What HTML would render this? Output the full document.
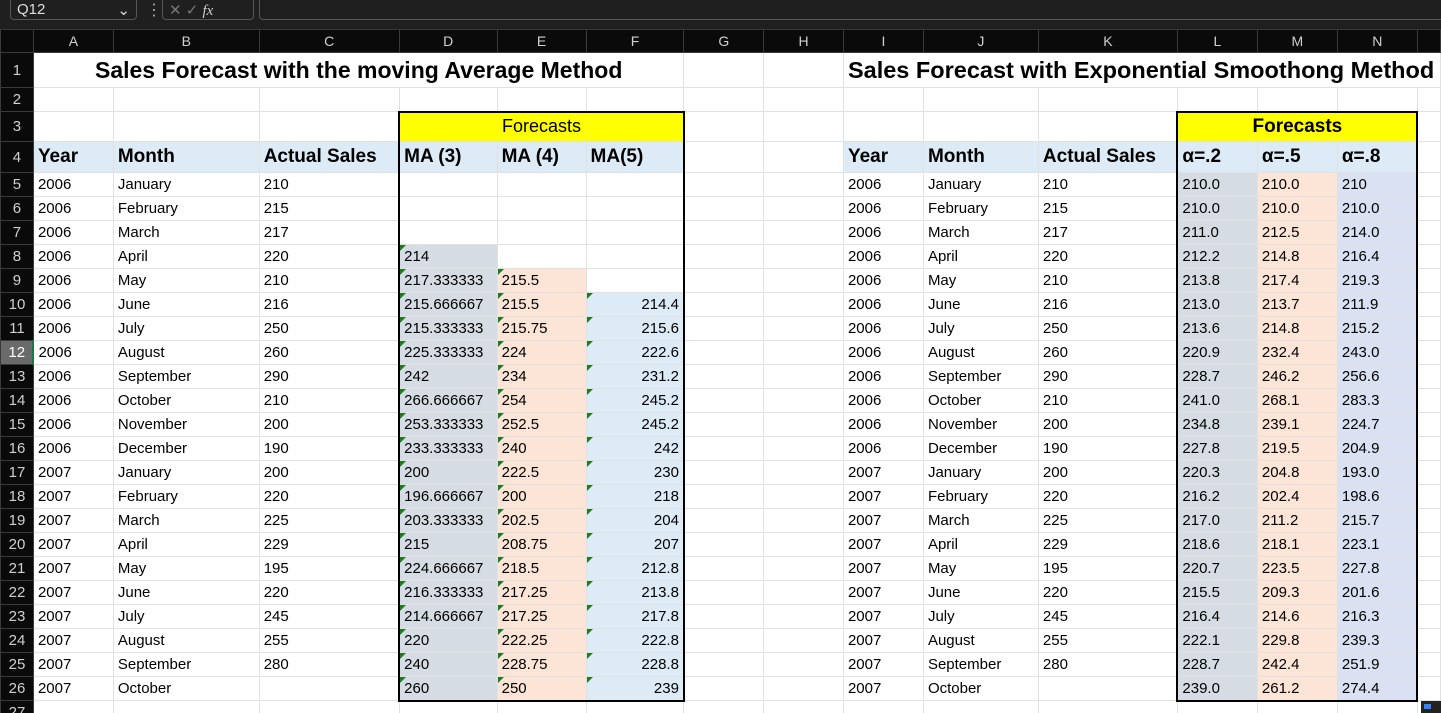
<!DOCTYPE html>
<html><head><meta charset="utf-8"><style>
*{margin:0;padding:0;box-sizing:border-box}
html,body{width:1441px;height:713px;overflow:hidden}
body{background:#fff;font-family:"Liberation Sans",sans-serif;position:relative}
#fb{position:absolute;left:0;top:0;width:1441px;height:29px;background:#1f1f1f}
.nb{position:absolute;top:-4px;height:24px;border:1px solid #555;border-radius:4px;color:#ddd;font-size:15px;padding:4px 6px}
table{position:absolute;left:0;top:29px;border-collapse:collapse;table-layout:fixed}
td{border:1px solid #e1e1e1;font-size:15px;padding:0 4px;white-space:nowrap;overflow:visible;height:24px;color:#000;position:relative}
tr.h td{background:#0a0a0a;color:#d0d0d0;text-align:center;border:1px solid #3a3a3a;height:23px;font-size:14px}
td.r{background:#0a0a0a;color:#d0d0d0;text-align:center;border:1px solid #3a3a3a;padding:0;font-size:15px}
td.sel{background:#6a6a6a;color:#fff;border-right:2px solid #217346}
.b4 td{height:31px;font-weight:bold;font-size:19px}
.b4 td.bl{background:#ddebf7}
.y{background:#ffff00}
.gD{background:#d6dce4}.gE{background:#fce4d6}.gF{background:#ddebf7;text-align:right}.gN{background:#d9e1f2}
.g::before{content:"";position:absolute;left:0;top:0;border-top:6px solid #1e7b1e;border-right:6px solid transparent}
.L{border-left:2px solid #000!important}.R{border-right:2px solid #000!important}.T{border-top:2px solid #000!important}.B{border-bottom:2px solid #000!important}
.t{font-weight:bold;font-size:23px;overflow:visible}
</style></head><body>
<div id="fb"><div class="nb" style="left:10px;width:127px">Q12 <span style="float:right">⌄</span></div><div style="position:absolute;left:146px;top:0;color:#aaa;font-size:16px">⋮</div><div class="nb" style="left:162px;width:92px;color:#777">✕ ✓ <i style="color:#ccc;font-family:'Liberation Serif',serif">fx</i></div><div class="nb" style="left:259px;width:1190px"></div></div>
<table>
<colgroup><col style="width:33px"><col style="width:80px"><col style="width:146px"><col style="width:140px"><col style="width:98px"><col style="width:89px"><col style="width:98px"><col style="width:80px"><col style="width:80px"><col style="width:80px"><col style="width:115px"><col style="width:139px"><col style="width:80px"><col style="width:80px"><col style="width:80px"><col style="width:23px"></colgroup>
<tr class="h"><td style="background:#0a0a0a"></td><td>A</td><td>B</td><td>C</td><td>D</td><td>E</td><td>F</td><td>G</td><td>H</td><td>I</td><td>J</td><td>K</td><td>L</td><td>M</td><td>N</td><td></td></tr>
<tr style="height:35px"><td class="r">1</td><td colspan="6" class="t" style="text-align:center">Sales Forecast with the moving Average Method</td><td></td><td></td><td colspan="7" class="t" style="font-size:23.5px">Sales Forecast with Exponential Smoothong Method</td></tr>
<tr style="height:23px"><td class="r" style="height:23px">2</td><td></td><td></td><td></td><td></td><td></td><td></td><td></td><td></td><td></td><td></td><td></td><td></td><td></td><td></td><td></td></tr>
<tr><td class="r" style="height:30px">3</td><td></td><td></td><td></td><td colspan="3" class="y L R T" style="text-align:center;font-size:18px">Forecasts</td><td></td><td></td><td></td><td></td><td></td><td colspan="3" class="y L R T" style="text-align:center;font-size:19px;font-weight:bold">Forecasts</td><td></td></tr>
<tr class="b4"><td class="r" style="font-weight:normal;font-size:15px">4</td><td class="bl">Year</td><td class="bl">Month</td><td class="bl">Actual Sales</td><td class="bl L">MA (3)</td><td class="bl">MA (4)</td><td class="bl R">MA(5)</td><td></td><td></td><td class="bl">Year</td><td class="bl">Month</td><td class="bl">Actual Sales</td><td class="bl L">α=.2</td><td class="bl">α=.5</td><td class="bl R">α=.8</td><td></td></tr>
<tr><td class="r">5</td><td>2006</td><td>January</td><td>210</td><td class="L"></td><td></td><td class="R"></td><td></td><td></td><td>2006</td><td>January</td><td>210</td><td class="gD L">210.0</td><td class="gE">210.0</td><td class="gN R">210</td><td></td></tr>
<tr><td class="r">6</td><td>2006</td><td>February</td><td>215</td><td class="L"></td><td></td><td class="R"></td><td></td><td></td><td>2006</td><td>February</td><td>215</td><td class="gD L">210.0</td><td class="gE">210.0</td><td class="gN R">210.0</td><td></td></tr>
<tr><td class="r">7</td><td>2006</td><td>March</td><td>217</td><td class="L"></td><td></td><td class="R"></td><td></td><td></td><td>2006</td><td>March</td><td>217</td><td class="gD L">211.0</td><td class="gE">212.5</td><td class="gN R">214.0</td><td></td></tr>
<tr><td class="r">8</td><td>2006</td><td>April</td><td>220</td><td class="gD g L">214</td><td></td><td class="R"></td><td></td><td></td><td>2006</td><td>April</td><td>220</td><td class="gD L">212.2</td><td class="gE">214.8</td><td class="gN R">216.4</td><td></td></tr>
<tr><td class="r">9</td><td>2006</td><td>May</td><td>210</td><td class="gD g L">217.333333</td><td class="gE g">215.5</td><td class="R"></td><td></td><td></td><td>2006</td><td>May</td><td>210</td><td class="gD L">213.8</td><td class="gE">217.4</td><td class="gN R">219.3</td><td></td></tr>
<tr><td class="r">10</td><td>2006</td><td>June</td><td>216</td><td class="gD g L">215.666667</td><td class="gE g">215.5</td><td class="gF g R">214.4</td><td></td><td></td><td>2006</td><td>June</td><td>216</td><td class="gD L">213.0</td><td class="gE">213.7</td><td class="gN R">211.9</td><td></td></tr>
<tr><td class="r">11</td><td>2006</td><td>July</td><td>250</td><td class="gD g L">215.333333</td><td class="gE g">215.75</td><td class="gF g R">215.6</td><td></td><td></td><td>2006</td><td>July</td><td>250</td><td class="gD L">213.6</td><td class="gE">214.8</td><td class="gN R">215.2</td><td></td></tr>
<tr><td class="r sel">12</td><td>2006</td><td>August</td><td>260</td><td class="gD g L">225.333333</td><td class="gE g">224</td><td class="gF g R">222.6</td><td></td><td></td><td>2006</td><td>August</td><td>260</td><td class="gD L">220.9</td><td class="gE">232.4</td><td class="gN R">243.0</td><td></td></tr>
<tr><td class="r">13</td><td>2006</td><td>September</td><td>290</td><td class="gD g L">242</td><td class="gE g">234</td><td class="gF g R">231.2</td><td></td><td></td><td>2006</td><td>September</td><td>290</td><td class="gD L">228.7</td><td class="gE">246.2</td><td class="gN R">256.6</td><td></td></tr>
<tr><td class="r">14</td><td>2006</td><td>October</td><td>210</td><td class="gD g L">266.666667</td><td class="gE g">254</td><td class="gF g R">245.2</td><td></td><td></td><td>2006</td><td>October</td><td>210</td><td class="gD L">241.0</td><td class="gE">268.1</td><td class="gN R">283.3</td><td></td></tr>
<tr><td class="r">15</td><td>2006</td><td>November</td><td>200</td><td class="gD g L">253.333333</td><td class="gE g">252.5</td><td class="gF g R">245.2</td><td></td><td></td><td>2006</td><td>November</td><td>200</td><td class="gD L">234.8</td><td class="gE">239.1</td><td class="gN R">224.7</td><td></td></tr>
<tr><td class="r">16</td><td>2006</td><td>December</td><td>190</td><td class="gD g L">233.333333</td><td class="gE g">240</td><td class="gF g R">242</td><td></td><td></td><td>2006</td><td>December</td><td>190</td><td class="gD L">227.8</td><td class="gE">219.5</td><td class="gN R">204.9</td><td></td></tr>
<tr><td class="r">17</td><td>2007</td><td>January</td><td>200</td><td class="gD g L">200</td><td class="gE g">222.5</td><td class="gF g R">230</td><td></td><td></td><td>2007</td><td>January</td><td>200</td><td class="gD L">220.3</td><td class="gE">204.8</td><td class="gN R">193.0</td><td></td></tr>
<tr><td class="r">18</td><td>2007</td><td>February</td><td>220</td><td class="gD g L">196.666667</td><td class="gE g">200</td><td class="gF g R">218</td><td></td><td></td><td>2007</td><td>February</td><td>220</td><td class="gD L">216.2</td><td class="gE">202.4</td><td class="gN R">198.6</td><td></td></tr>
<tr><td class="r">19</td><td>2007</td><td>March</td><td>225</td><td class="gD g L">203.333333</td><td class="gE g">202.5</td><td class="gF g R">204</td><td></td><td></td><td>2007</td><td>March</td><td>225</td><td class="gD L">217.0</td><td class="gE">211.2</td><td class="gN R">215.7</td><td></td></tr>
<tr><td class="r">20</td><td>2007</td><td>April</td><td>229</td><td class="gD g L">215</td><td class="gE g">208.75</td><td class="gF g R">207</td><td></td><td></td><td>2007</td><td>April</td><td>229</td><td class="gD L">218.6</td><td class="gE">218.1</td><td class="gN R">223.1</td><td></td></tr>
<tr><td class="r">21</td><td>2007</td><td>May</td><td>195</td><td class="gD g L">224.666667</td><td class="gE g">218.5</td><td class="gF g R">212.8</td><td></td><td></td><td>2007</td><td>May</td><td>195</td><td class="gD L">220.7</td><td class="gE">223.5</td><td class="gN R">227.8</td><td></td></tr>
<tr><td class="r">22</td><td>2007</td><td>June</td><td>220</td><td class="gD g L">216.333333</td><td class="gE g">217.25</td><td class="gF g R">213.8</td><td></td><td></td><td>2007</td><td>June</td><td>220</td><td class="gD L">215.5</td><td class="gE">209.3</td><td class="gN R">201.6</td><td></td></tr>
<tr><td class="r">23</td><td>2007</td><td>July</td><td>245</td><td class="gD g L">214.666667</td><td class="gE g">217.25</td><td class="gF g R">217.8</td><td></td><td></td><td>2007</td><td>July</td><td>245</td><td class="gD L">216.4</td><td class="gE">214.6</td><td class="gN R">216.3</td><td></td></tr>
<tr><td class="r">24</td><td>2007</td><td>August</td><td>255</td><td class="gD g L">220</td><td class="gE g">222.25</td><td class="gF g R">222.8</td><td></td><td></td><td>2007</td><td>August</td><td>255</td><td class="gD L">222.1</td><td class="gE">229.8</td><td class="gN R">239.3</td><td></td></tr>
<tr><td class="r">25</td><td>2007</td><td>September</td><td>280</td><td class="gD g L">240</td><td class="gE g">228.75</td><td class="gF g R">228.8</td><td></td><td></td><td>2007</td><td>September</td><td>280</td><td class="gD L">228.7</td><td class="gE">242.4</td><td class="gN R">251.9</td><td></td></tr>
<tr><td class="r">26</td><td>2007</td><td>October</td><td></td><td class="gD g L B">260</td><td class="gE g B">250</td><td class="gF g R B">239</td><td></td><td></td><td>2007</td><td>October</td><td></td><td class="gD L B">239.0</td><td class="gE B">261.2</td><td class="gN R B">274.4</td><td></td></tr>
<tr><td class="r">27</td><td></td><td></td><td></td><td></td><td></td><td></td><td></td><td></td><td></td><td></td><td></td><td></td><td></td><td></td><td></td></tr>
</table>
<div style="position:absolute;left:1421px;top:701px;width:20px;height:12px;background:#222"><div style="margin:3px;width:7px;height:5px;background:#3b82f6"></div></div>
</body></html>
